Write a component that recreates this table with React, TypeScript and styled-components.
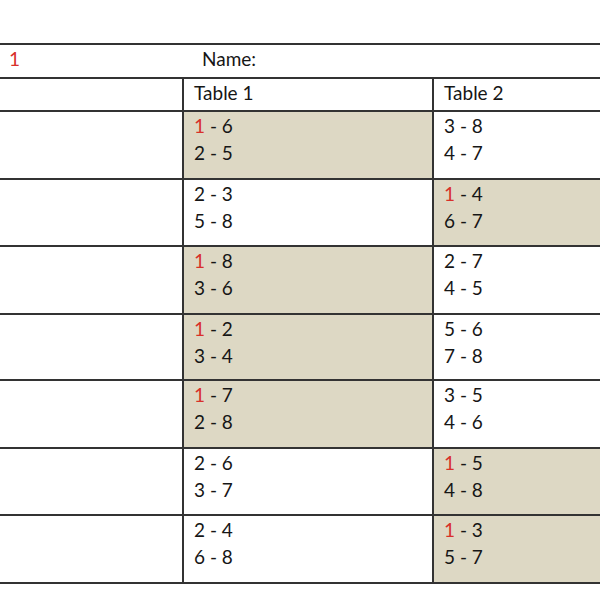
import React from "react";
import styled, { createGlobalStyle } from "styled-components";

const GlobalStyle = createGlobalStyle`
  html, body {
    margin: 0;
    padding: 0;
    background: #ffffff;
  }
  body {
    font-family: Lato, "Liberation Sans", sans-serif;
    color: #161616;
  }
`;

const LINE = "#333333";
const SHADE = "#ddd8c4";
const RED = "#d8302a";

const Page = styled.div`
  width: 600px;
  height: 600px;
  overflow: hidden;
  padding-top: 43px;
  box-sizing: border-box;
  background: #ffffff;
`;

const Sheet = styled.div`
  width: 680px;
  display: flex;
  flex-direction: column;
  font-size: 19px;
  line-height: 27px;
`;

const TitleRow = styled.div`
  display: flex;
  align-items: flex-start;
  height: 34px;
  box-sizing: border-box;
  border-top: 2px solid ${LINE};
  padding-left: 9px;
`;

const TitleNumber = styled.span`
  width: 193px;
  color: ${RED};
`;

const TitleLabel = styled.span`
  color: #161616;
`;

const Row = styled.div<{ $height: number }>`
  display: grid;
  grid-template-columns: 182px 250px 1fr;
  height: ${(p) => p.$height}px;
  box-sizing: border-box;
  border-top: 2px solid ${LINE};
`;

const LastRule = styled.div`
  height: 2px;
  background: ${LINE};
`;

const BlankCell = styled.div``;

const Cell = styled.div<{ $shaded?: boolean }>`
  border-left: 2px solid ${LINE};
  padding: 0 0 0 10px;
  background: ${(p) => (p.$shaded ? SHADE : "transparent")};
  display: flex;
  flex-direction: column;
`;

const Pair = styled.span`
  white-space: pre;
`;

const Red = styled.span`
  color: ${RED};
`;

type Match = [string, string];
type Round = { t1: Match[]; t2: Match[]; height: number };

const rounds: Round[] = [
  { t1: [["1", "6"], ["2", "5"]], t2: [["3", "8"], ["4", "7"]], height: 68 },
  { t1: [["2", "3"], ["5", "8"]], t2: [["1", "4"], ["6", "7"]], height: 67 },
  { t1: [["1", "8"], ["3", "6"]], t2: [["2", "7"], ["4", "5"]], height: 68 },
  { t1: [["1", "2"], ["3", "4"]], t2: [["5", "6"], ["7", "8"]], height: 66 },
  { t1: [["1", "7"], ["2", "8"]], t2: [["3", "5"], ["4", "6"]], height: 68 },
  { t1: [["2", "6"], ["3", "7"]], t2: [["1", "5"], ["4", "8"]], height: 67 },
  { t1: [["2", "4"], ["6", "8"]], t2: [["1", "3"], ["5", "7"]], height: 68 },
];

const hasOne = (m: Match[]) => m.some(([a]) => a === "1");

const Pairs: React.FC<{ matches: Match[] }> = ({ matches }) => (
  <>
    {matches.map(([a, b], i) => (
      <Pair key={i}>
        {a === "1" ? <Red>{a}</Red> : a}
        {` - ${b}`}
      </Pair>
    ))}
  </>
);

export default function App() {
  return (
    <>
      <GlobalStyle />
      <Page>
        <Sheet>
          <TitleRow>
            <TitleNumber>1</TitleNumber>
            <TitleLabel>Name:</TitleLabel>
          </TitleRow>
          <Row $height={33}>
            <BlankCell />
            <Cell>Table 1</Cell>
            <Cell>Table 2</Cell>
          </Row>
          {rounds.map((r, i) => (
            <Row key={i} $height={r.height}>
              <BlankCell />
              <Cell $shaded={hasOne(r.t1)}>
                <Pairs matches={r.t1} />
              </Cell>
              <Cell $shaded={hasOne(r.t2)}>
                <Pairs matches={r.t2} />
              </Cell>
            </Row>
          ))}
          <LastRule />
        </Sheet>
      </Page>
    </>
  );
}
